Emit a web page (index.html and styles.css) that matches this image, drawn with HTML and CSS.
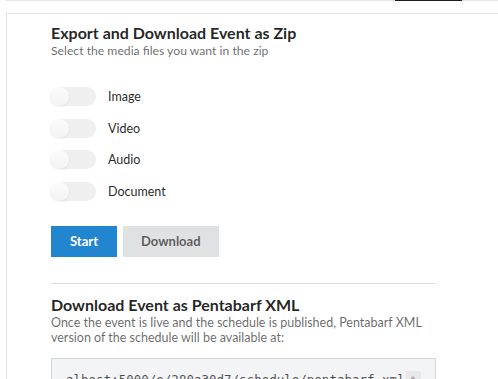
FILE: index.html
```html
<!DOCTYPE html>
<html lang="en">
<head>
  <meta charset="UTF-8">
  <title>Export</title>
  <link rel="stylesheet" href="styles.css">
</head>
<body>

  <!-- Tab menu line -->
  <div class="tabs">
    <div class="tab-active"></div>
  </div>

  <div class="segment">
    <div class="content">

      <!-- Zip export -->
      <h3 class="header">Export and Download Event as Zip
        <span class="sub-header">Select the media files you want in the zip</span>
      </h3>

      <div class="toggles">
        <label class="toggle"><span class="track"><span class="knob"></span></span>Image</label>
        <label class="toggle"><span class="track"><span class="knob"></span></span>Video</label>
        <label class="toggle"><span class="track"><span class="knob"></span></span>Audio</label>
        <label class="toggle"><span class="track"><span class="knob"></span></span>Document</label>
      </div>

      <div class="buttons">
        <button class="btn primary">Start</button>
        <button class="btn">Download</button>
      </div>

      <div class="divider"></div>

      <!-- Pentabarf -->
      <h3 class="header">Download Event as Pentabarf XML</h3>
      <p class="desc">Once the event is live and the schedule is published, Pentabarf XML version of the schedule will be available at:</p>

      <div class="code-box">
        <div class="code">alhost:5000/e/280a30d7/schedule/pentabarf.xml</div>
        <div class="scroll-up"></div>
      </div>

    </div>
  </div>

</body>
</html>
```

FILE: styles.css
```css
/* Page */
body {
  margin: 0;
  font-family: 'Lato', sans-serif;
  font-size: 12.5px;
  color: rgba(0, 0, 0, 0.87);
  background-color: #ffffff;
  overflow: hidden;
}

/* Tab menu underline */
.tabs {
  height: 1px;
  margin-left: 6px;
  padding-right: 36px;
  background-color: #e4e4e4;
  display: flex;
  justify-content: flex-end;
}

.tab-active {
  width: 67px;
  height: 1px;
  background-color: #1b1c1d;
}

/* Card */
.segment {
  margin-top: 12px;
  margin-left: 6px;
  width: 560px;
  border: 1px solid #e2e2e2;
  padding: 9px 44px 0;
  box-sizing: border-box;
}

.content {
  width: 385px;
}

.header {
  margin: 0;
  font-size: 16px;
  font-weight: 700;
  line-height: 20px;
  color: rgba(0, 0, 0, 0.87);
}

.sub-header {
  display: block;
  font-size: 12.2px;
  font-weight: 400;
  line-height: 15px;
  color: rgba(0, 0, 0, 0.6);
}

/* Toggles */
.toggles {
  margin-top: 29px;
  display: flex;
  flex-direction: column;
  gap: 12.5px;
}

.toggle {
  display: flex;
  align-items: center;
  gap: 12px;
  height: 19px;
  font-size: 12.5px;
}

.track {
  position: relative;
  width: 46px;
  height: 19px;
  border-radius: 10px;
  background-color: #efefef;
  margin-left: -1px;
}

.knob {
  position: absolute;
  left: 0;
  top: 0;
  width: 19px;
  height: 19px;
  border-radius: 50%;
  background: linear-gradient(#fbfbfb, #f3f3f3);
  box-shadow: 0 1px 2px rgba(34, 36, 38, 0.08);
}

/* Buttons */
.buttons {
  margin-top: 25px;
  display: flex;
  gap: 6px;
}

.btn {
  font-family: 'Lato', sans-serif;
  font-size: 13px;
  font-weight: 700;
  line-height: 13px;
  padding: 9px 18px;
  border: none;
  border-radius: 0;
  background-color: #e0e1e2;
  color: rgba(0, 0, 0, 0.6);
}

.btn.primary {
  padding: 9px 19px;
  background-color: #2185d0;
  color: #ffffff;
}

.divider {
  margin-top: 26px;
  border-top: 1px solid rgba(34, 36, 38, 0.15);
  border-bottom: 1px solid rgba(255, 255, 255, 0.1);
  margin-bottom: 10px;
}

.desc {
  margin: 0;
  font-size: 12.5px;
  line-height: 15px;
  color: rgba(0, 0, 0, 0.6);
}

/* Code box */
.code-box {
  position: relative;
  margin-top: 13px;
  height: 60px;
  border: 1px solid #d6d6d6;
  background-color: #f3f4f5;
  overflow: hidden;
}

.code {
  padding: 12px 14px;
  font-family: 'DejaVu Sans Mono', monospace;
  font-size: 12.5px;
  line-height: 18px;
  color: rgba(0, 0, 0, 0.7);
  white-space: nowrap;
}

.scroll-up {
  position: absolute;
  right: 14px;
  top: 12px;
  width: 15px;
  height: 15px;
  background-color: #e8e8e8;
}

.scroll-up::after {
  content: "";
  position: absolute;
  left: 4px;
  top: 5px;
  border-left: 3.5px solid transparent;
  border-right: 3.5px solid transparent;
  border-bottom: 4px solid #a3a3a3;
}
```
